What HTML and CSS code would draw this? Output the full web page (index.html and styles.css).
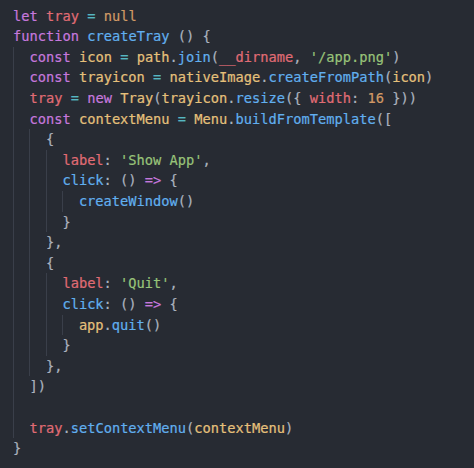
FILE: index.html
```html
<!DOCTYPE html>
<html>
<head>
<meta charset="utf-8">
<link rel="stylesheet" href="styles.css">
</head>
<body>
<div class="editor">
  <div class="line"><span class="t"><span class="k">let</span> <span class="v">tray</span> <span class="o">=</span> <span class="n">null</span></span></div>
  <div class="line"><span class="t"><span class="k">function</span> <span class="f">createTray</span> () {</span></div>
  <div class="line"><span class="g"></span><span class="t"><span class="k">const</span> <span class="y">icon</span> <span class="o">=</span> <span class="y">path</span>.<span class="f">join</span>(<span class="v">__dirname</span>, <span class="s">'/app.png'</span>)</span></div>
  <div class="line"><span class="g"></span><span class="t"><span class="k">const</span> <span class="y">trayicon</span> <span class="o">=</span> <span class="y">nativeImage</span>.<span class="f">createFromPath</span>(<span class="y">icon</span>)</span></div>
  <div class="line"><span class="g"></span><span class="t"><span class="v">tray</span> <span class="o">=</span> <span class="k">new</span> <span class="y">Tray</span>(<span class="y">trayicon</span>.<span class="f">resize</span>({ <span class="v">width</span>: <span class="n">16</span> }))</span></div>
  <div class="line"><span class="g"></span><span class="t"><span class="k">const</span> <span class="y">contextMenu</span> <span class="o">=</span> <span class="y">Menu</span>.<span class="f">buildFromTemplate</span>([</span></div>
  <div class="line"><span class="g"></span><span class="g"></span><span class="t">{</span></div>
  <div class="line"><span class="g"></span><span class="g"></span><span class="g"></span><span class="t"><span class="v">label</span>: <span class="s">'Show App'</span>,</span></div>
  <div class="line"><span class="g"></span><span class="g"></span><span class="g"></span><span class="t"><span class="f">click</span>: () <span class="k">=&gt;</span> {</span></div>
  <div class="line"><span class="g"></span><span class="g"></span><span class="g"></span><span class="g"></span><span class="t"><span class="f">createWindow</span>()</span></div>
  <div class="line"><span class="g"></span><span class="g"></span><span class="g"></span><span class="t">}</span></div>
  <div class="line"><span class="g"></span><span class="g"></span><span class="t">},</span></div>
  <div class="line"><span class="g"></span><span class="g"></span><span class="t">{</span></div>
  <div class="line"><span class="g"></span><span class="g"></span><span class="g"></span><span class="t"><span class="v">label</span>: <span class="s">'Quit'</span>,</span></div>
  <div class="line"><span class="g"></span><span class="g"></span><span class="g"></span><span class="t"><span class="f">click</span>: () <span class="k">=&gt;</span> {</span></div>
  <div class="line"><span class="g"></span><span class="g"></span><span class="g"></span><span class="g"></span><span class="t"><span class="y">app</span>.<span class="f">quit</span>()</span></div>
  <div class="line"><span class="g"></span><span class="g"></span><span class="g"></span><span class="t">}</span></div>
  <div class="line"><span class="g"></span><span class="g"></span><span class="t">},</span></div>
  <div class="line"><span class="g"></span><span class="t">])</span></div>
  <div class="line"><span class="g"></span><span class="t"></span></div>
  <div class="line"><span class="g"></span><span class="t"><span class="v">tray</span>.<span class="f">setContextMenu</span>(<span class="y">contextMenu</span>)</span></div>
  <div class="line"><span class="t">}</span></div>
</div>
</body>
</html>
```

FILE: styles.css
```css
html, body {
  margin: 0;
  padding: 0;
  background: #272b33;
}

.editor {
  width: 474px;
  height: 468px;
  box-sizing: border-box;
  padding: 5.7px 0 0 13px;
  background: #272b33;
  font-family: "DejaVu Sans Mono", monospace;
  font-size: 13.7px;
  color: #abb2bf;
  -webkit-text-stroke: 0.2px currentColor;
}

.line {
  display: flex;
  height: 20.6px;
  line-height: 20.6px;
}

.g {
  flex: none;
  width: 2ch;
  box-shadow: inset 1px 0 0 #3a3f4a;
}

.t {
  white-space: pre;
}

.k { color: #c678dd; }
.v { color: #e06c75; }
.f { color: #61afef; }
.y { color: #e5c07b; }
.s { color: #98c379; }
.n { color: #d19a66; }
.o { color: #56b6c2; }
```
